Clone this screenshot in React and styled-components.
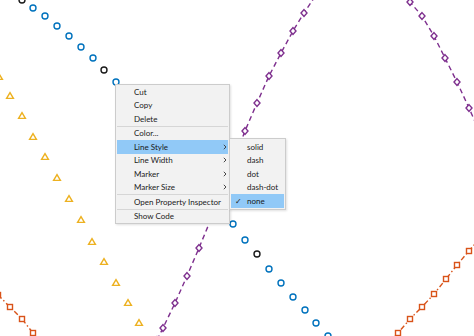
import * as React from "react"
import styled, { createGlobalStyle } from 'styled-components';

// Styles
const GlobalStyle = createGlobalStyle`
  html, body {
    margin: 0;
    padding: 0;
    background: #ffffff;
    overflow: hidden;
  }
`

const Stage = styled.div`
  position: relative;
  width: 474px;
  height: 336px;
  overflow: hidden;
  background: #ffffff;
`

const Plot = styled.svg`
  display: block;
  width: 474px;
  height: 336px;
`

const Menu = styled.div`
  position: absolute;
  left: ${p => p.$x}px;
  top: ${p => p.$y}px;
  width: ${p => p.$w}px;
  box-sizing: border-box;
  padding: ${p => p.$pad}px 1px;
  background: #f2f2f2;
  border: 1px solid #cccccc;
  box-shadow: 1px 1px 2px rgba(0, 0, 0, 0.12);
  font-family: Lato, "Noto Sans", sans-serif;
  font-size: 8px;
  color: #1a1a1a;
`

const Item = styled.div`
  display: grid;
  grid-template-columns: ${p => p.$gutter}px 1fr 8px;
  align-items: center;
  height: 13.5px;
  background: ${p => (p.$active ? '#91c9f7' : 'transparent')};
  white-space: nowrap;
`

const Check = styled.span`
  padding-left: 4px;
  font-family: "Noto Sans", sans-serif;
  font-size: 8px;
  color: #222222;
`

const Arrow = styled.svg`
  width: 4px;
  height: 6px;
  justify-self: end;
  margin-right: 1px;
`

const Separator = styled.div`
  height: 1px;
  background: #d6d6d6;
`

// Data
const blue = [
  [22, 0], [33, 8], [45, 16], [57, 26], [69, 36], [81, 47], [93, 58], [104, 70], [116, 82],
  [128, 95], [233, 224], [245, 240], [257, 254], [269, 269], [281, 283], [293, 297],
  [305, 310], [316, 323], [328, 336]
]
const darkBlue = ['22,0', '104,70', '257,254']

const yellow = [
  [-1, 77], [10, 96], [22, 116], [33, 137], [45, 157], [57, 178], [69, 199], [81, 220],
  [92, 242], [104, 262], [116, 283], [128, 303], [139, 323], [151, 343]
]

const purpleLeft = [
  [157, 340], [163, 328], [175, 303], [187, 276], [199, 248], [211, 219], [222, 189],
  [234, 160], [245, 131], [257, 103], [269, 76], [281, 53], [293, 31], [304, 13], [316, -5]
]
const purpleRight = [
  [398, -12], [410, 2], [422, 16], [434, 36], [445, 58], [457, 82], [469, 108], [481, 135]
]

const orangeLeft = [[-2, 295], [10, 307], [22, 319], [33, 333], [45, 347]]
const orangeRight = [
  [386, 347], [398, 333], [410, 319], [422, 307], [434, 294], [446, 279], [457, 265],
  [469, 251], [481, 237]
]

const menuItems = [
  { label: 'Cut' },
  { label: 'Copy' },
  { label: 'Delete' },
  { sep: true },
  { label: 'Color...' },
  { label: 'Line Style', sub: true, active: true },
  { label: 'Line Width', sub: true },
  { label: 'Marker', sub: true },
  { label: 'Marker Size', sub: true },
  { sep: true },
  { label: 'Open Property Inspector' },
  { sep: true },
  { label: 'Show Code' }
]

const styles = ['solid', 'dash', 'dot', 'dash-dot', 'none']

const pts = list => list.map(p => p.join(',')).join(' ')

// Markup
const Chart = () => (
  <Plot viewBox="0 0 474 336">
    <g fill="none" strokeWidth="1.4">
      <polyline points={pts(purpleLeft)} stroke="#7e2f8e" strokeDasharray="5 3.5" />
      <polyline points={pts(purpleRight)} stroke="#7e2f8e" strokeDasharray="5 3.5" />
      <polyline points={pts(orangeLeft)} stroke="#d95319" strokeDasharray="5 2.5 1.5 2.5" />
      <polyline points={pts(orangeRight)} stroke="#d95319" strokeDasharray="5 2.5 1.5 2.5" />

      {[...purpleLeft, ...purpleRight].map(([x, y], i) => (
        <polygon key={'d' + i} fill="#ffffff" stroke="#7e2f8e"
          points={`${x},${y - 3.4} ${x + 3},${y} ${x},${y + 3.4} ${x - 3},${y}`} />
      ))}
      {[...orangeLeft, ...orangeRight].map(([x, y], i) => (
        <rect key={'s' + i} x={x - 2.5} y={y - 2.5} width="5" height="5" fill="#ffffff" stroke="#d95319" />
      ))}
      {yellow.map(([x, y], i) => (
        <polygon key={'t' + i} stroke="#edb120" strokeLinejoin="miter"
          points={`${x},${y - 3.3} ${x + 3.4},${y + 2.4} ${x - 3.4},${y + 2.4}`} />
      ))}
      {blue.map(([x, y], i) => (
        <circle key={'c' + i} cx={x} cy={y} r="3"
          stroke={darkBlue.includes(`${x},${y}`) ? '#1a1a1a' : '#0072bd'} />
      ))}
    </g>
  </Plot>
)

const App = () => {
  return(
    <Stage>
      <GlobalStyle />
      <Chart />
      <Menu $x={115} $y={84} $w={115} $pad={0}>
        {menuItems.map((item, index) => item.sep ? (
          <Separator key={index} />
        ) : (
          <Item key={index} $gutter={17} $active={item.active}>
            <span />
            <span>{item.label}</span>
            {item.sub ? (
              <Arrow viewBox="0 0 4 6">
                <polyline points="0.8,0.8 3,3 0.8,5.2" fill="none" stroke="#333" strokeWidth="0.9" />
              </Arrow>
            ) : <span />}
          </Item>
        ))}
      </Menu>
      <Menu $x={229} $y={138} $w={57} $pad={1}>
        {styles.map((s, index) => (
          <Item key={s} $gutter={16} $active={s === 'none'}>
            {s === 'none' ? <Check>✓</Check> : <span />}
            <span>{s}</span>
            <span />
          </Item>
        ))}
      </Menu>
    </Stage>
  )
}

export default App
